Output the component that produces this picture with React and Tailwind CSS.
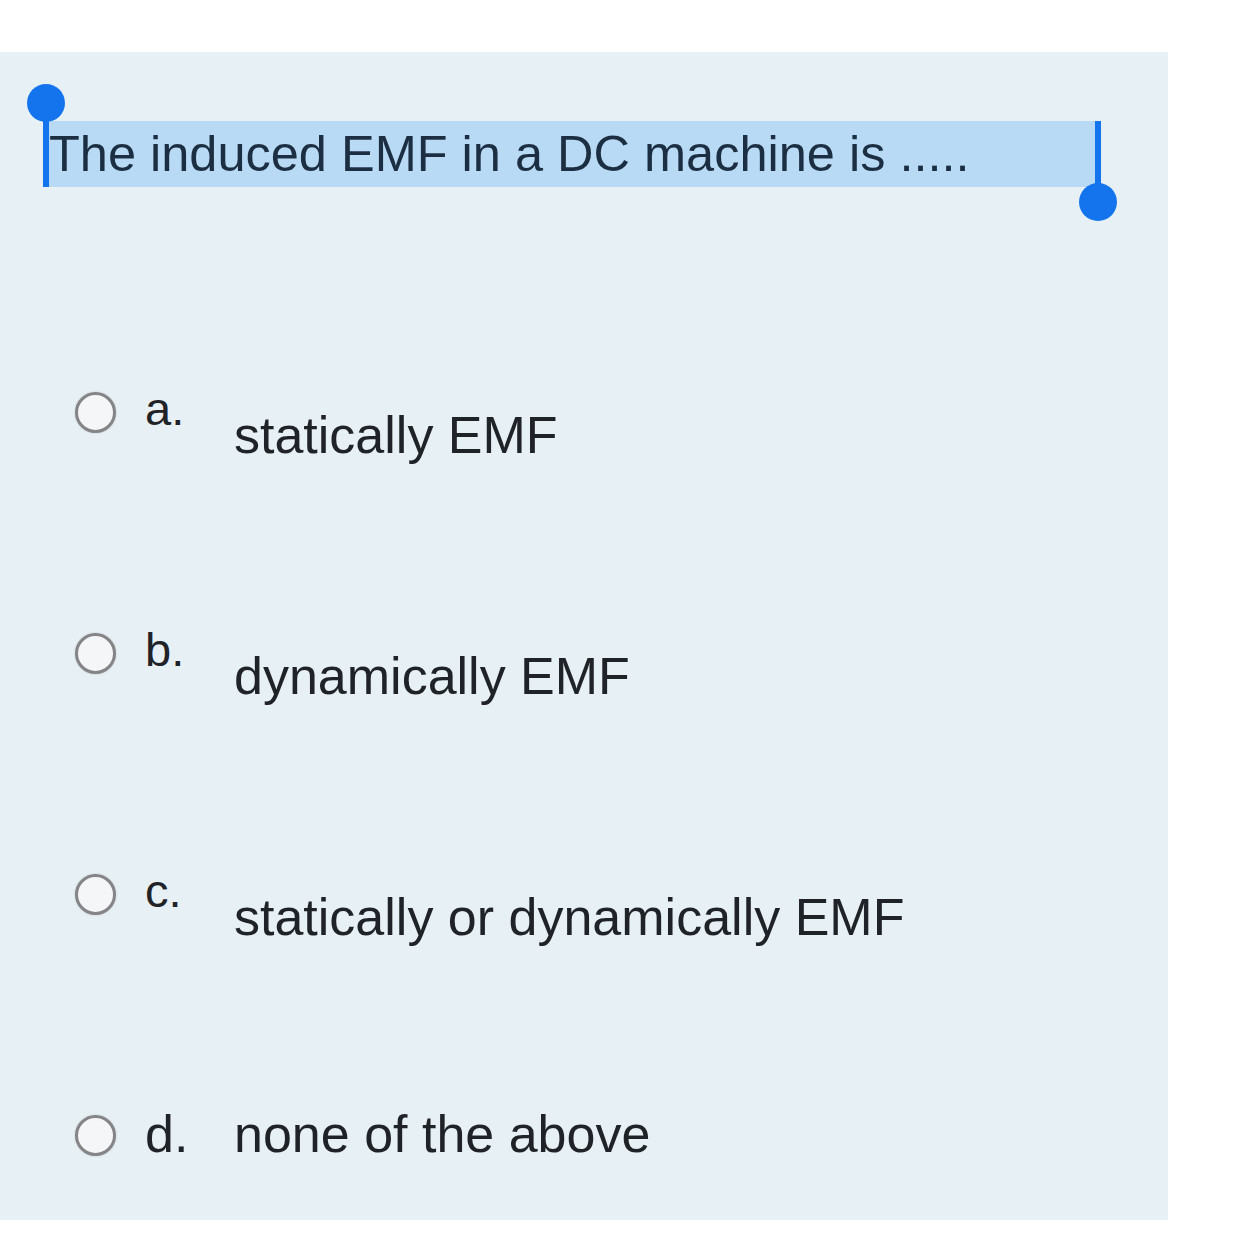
import React from 'react';

const options = [
  { key: 'a.', text: 'statically EMF', raised: true },
  { key: 'b.', text: 'dynamically EMF', raised: true },
  { key: 'c.', text: 'statically or dynamically EMF', raised: true },
  { key: 'd.', text: 'none of the above', raised: false },
];

const Option = ({ option }) => (
  <div className="flex items-start pl-[75px]">
    <div className="mt-[7px] w-[41px] h-[41px] shrink-0 rounded-full border-[3px] border-[#858587] bg-[#f4f6f7] shadow-[0_0_2px_rgba(0,0,0,0.2)]" />
    <div
      className={
        option.raised
          ? 'ml-[29px] w-[89px] shrink-0 text-[47px] leading-none text-[#1f2328]'
          : 'ml-[29px] w-[89px] shrink-0 text-[52px] leading-none text-[#1f2328]'
      }
    >
      {option.key}
    </div>
    <div
      className={
        option.raised
          ? 'mt-[24px] text-[52px] leading-none text-[#1f2328] whitespace-nowrap'
          : 'text-[52px] leading-none text-[#1f2328] whitespace-nowrap'
      }
    >
      {option.text}
    </div>
  </div>
);

export default function App() {
  return (
    <div className="w-[1242px] h-[1242px] bg-white pt-[52px]" style={{ fontFamily: '"Liberation Sans", Arial, sans-serif' }}>
      <div className="w-[1168px] h-[1168px] bg-[#e7f0f4] pt-[69px] overflow-hidden">
        <div className="relative ml-[44px] w-[1053px] h-[66px] bg-[#b9daf5] pl-[5px] text-[50.5px] leading-[66px] text-[#1c2f42] whitespace-nowrap">
          The induced EMF in a DC machine is .....
          {/* selection handles */}
          <span className="absolute left-[-1px] top-[-18px] w-[6px] h-[84px] bg-[#1474ee]" />
          <span className="absolute left-[-17px] top-[-37px] w-[38px] h-[38px] rounded-full bg-[#1474ee]" />
          <span className="absolute left-[1051px] top-0 w-[6px] h-[81px] bg-[#1474ee]" />
          <span className="absolute left-[1035px] top-[62px] w-[38px] h-[38px] rounded-full bg-[#1474ee]" />
        </div>
        <div className="mt-[198px] flex flex-col gap-[165px]">
          {options.map((o) => (
            <Option key={o.key} option={o} />
          ))}
        </div>
      </div>
    </div>
  );
}
